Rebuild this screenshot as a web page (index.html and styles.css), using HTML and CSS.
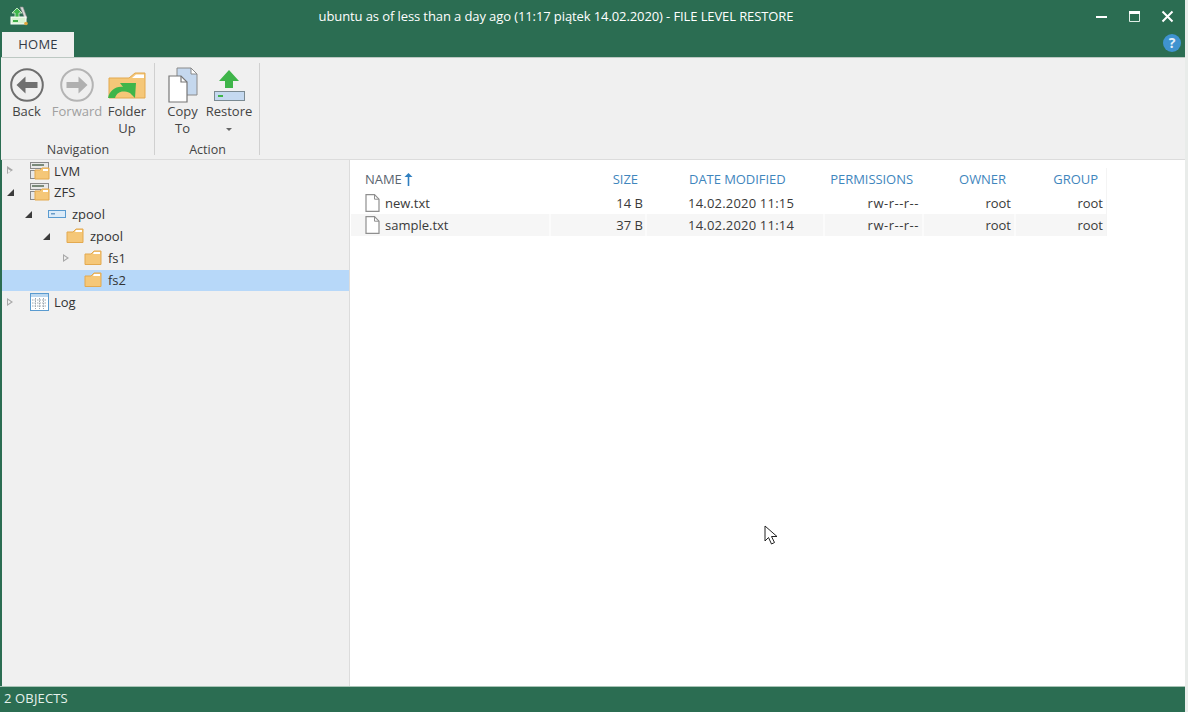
FILE: index.html
```html
<!DOCTYPE html>
<html lang="pl">
<head>
<meta charset="utf-8">
<title>File Level Restore</title>
<link rel="stylesheet" href="styles.css">
</head>
<body>
<div class="app">
  <header class="titlebar">
    <div class="titlerow">
      <svg class="appicon" width="20" height="20" viewBox="0 0 20 20"><path d="M11 1h3l4 11-2 1z" fill="#d8d8d8" stroke="#888" stroke-width=".6"/><rect x="2" y="11" width="15" height="7" fill="#d6f2d0" stroke="#fff"/><rect x="4" y="14" width="5" height="2" fill="#3fae49"/><path d="M8 2l5 5h-3v4H6V7H3z" fill="#3fb54a" stroke="#dff5dc" stroke-width=".8"/><circle cx="17" cy="17.500" r="1.800" fill="#e0a63c"/></svg>
      <div class="title">ubuntu as of less than a day ago (11:17 piątek 14.02.2020) - FILE LEVEL RESTORE</div>
      <div class="winbtns">
        <svg width="13" height="13" viewBox="0 0 13 13"><rect x="1" y="6" width="11" height="2" fill="#fff"/></svg>
        <svg width="13" height="13" viewBox="0 0 13 13"><path d="M1.500 1.500h10v10h-10z" fill="none" stroke="#dfeee7"/><rect x="1" y="1" width="11" height="3" fill="#fff"/></svg>
        <svg width="13" height="13" viewBox="0 0 13 13"><path d="M1.500 1.500l10 10M11.500 1.500l-10 10" stroke="#fff" stroke-width="2"/></svg>
      </div>
    </div>
    <div class="tabrow">
      <div class="tab">HOME</div>
      <div class="help">?</div>
    </div>
  </header>

  <section class="ribbon">
    <div class="group groupnav">
      <div class="tools">
        <div class="tool toolback">
          <svg width="36" height="36" viewBox="0 0 36 36"><circle cx="18" cy="18" r="15.800" fill="#efefef" stroke="#6e6e6e" stroke-width="2"/><path d="M7.500 18l9-8.500v5.500h12v6h-12v5.500z" fill="#707070"/></svg>
          <span class="lbl">Back</span>
        </div>
        <div class="tool toolfwd dis">
          <svg width="36" height="36" viewBox="0 0 36 36"><circle cx="18" cy="18" r="15.800" fill="#efefef" stroke="#b4b4b4" stroke-width="2"/><path d="M28.500 18l-9-8.500v5.500h-12v6h12v5.500z" fill="#b0b0b0"/></svg>
          <span class="lbl">Forward</span>
        </div>
        <div class="tool toolup">
          <svg width="38" height="30" viewBox="0 0 38 30"><path d="M1 6h20l6-5h10v25H1z" fill="#f5c778" stroke="#e3a94f"/><path d="M24 6l4-3.500h8V6z" fill="#fff"/><path d="M0 26C2 18 8 14 15 15l-3-4h16l-1 15-5-5C14 18 9 20 7 26z" fill="#3fb54a"/></svg>
          <span class="lbl">Folder<br>Up</span>
        </div>
      </div>
      <div class="grouplabel">Navigation</div>
    </div>
    <div class="group groupact">
      <div class="tools">
        <div class="tool toolcopy">
          <svg width="32" height="36" viewBox="0 0 32 36"><path d="M10 1h14l6 6v21H10z" fill="#c5d8ee" stroke="#8a8a8a"/><path d="M24 1v6h6z" fill="#fff" stroke="#8a8a8a"/><path d="M2 9h12l6 6v20H2z" fill="#fff" stroke="#777" stroke-width="1.200"/><path d="M14 9v6h6" fill="none" stroke="#777" stroke-width="1.200"/></svg>
          <span class="lbl">Copy<br>To</span>
        </div>
        <div class="tool toolrestore">
          <svg width="34" height="36" viewBox="0 0 34 36"><path d="M17 3l10 11h-6v7h-8v-7H7z" fill="#3fb54a"/><rect x="2.500" y="24.500" width="30" height="9" fill="#c5d9f0" stroke="#7b8a92"/><rect x="6" y="28" width="5" height="2" fill="#3fb54a"/></svg>
          <span class="lbl">Restore</span>
          <span class="caret"></span>
        </div>
      </div>
      <div class="grouplabel">Action</div>
    </div>
  </section>

  <main class="panes">
    <nav class="tree">
      <div class="node top">
        <span class="arrow open0"></span>
        <svg class="ic" width="20" height="18" viewBox="0 0 20 18"><rect x=".5" y=".5" width="18" height="6" fill="#e8e8e8" stroke="#8a8a8a"/><rect x="2" y="2" width="12" height="2" fill="#7a8a7a"/><rect x=".5" y="8.500" width="5" height="8" fill="#e8e8e8" stroke="#8a8a8a"/><path d="M5 8h5l2-2h7v11H5z" fill="#f5c778" stroke="#e3a94f"/><rect x="13" y="7" width="5" height="2" fill="#fff"/></svg>
        <span>LVM</span>
      </div>
      <div class="node">
        <span class="arrow filled"></span>
        <svg class="ic" width="20" height="18" viewBox="0 0 20 18"><rect x=".5" y=".5" width="18" height="6" fill="#e8e8e8" stroke="#8a8a8a"/><rect x="2" y="2" width="12" height="2" fill="#7a8a7a"/><rect x=".5" y="8.500" width="5" height="8" fill="#e8e8e8" stroke="#8a8a8a"/><path d="M5 8h5l2-2h7v11H5z" fill="#f5c778" stroke="#e3a94f"/><rect x="13" y="7" width="5" height="2" fill="#fff"/></svg>
        <span>ZFS</span>
      </div>
      <div class="node lvl1">
        <span class="arrow filled"></span>
        <svg class="ic" width="18" height="18" viewBox="0 0 18 18"><rect x=".5" y="5.500" width="17" height="7" fill="#dcebf8" stroke="#5a9bd0"/><rect x="3" y="8" width="4" height="1.500" fill="#6a9cc8"/></svg>
        <span>zpool</span>
      </div>
      <div class="node lvl2">
        <span class="arrow filled"></span>
        <svg class="ic" width="18" height="18" viewBox="0 0 18 18"><path d="M1 5h6l3-3h7v13.500H1z" fill="#f5c778" stroke="#e3a94f"/><path d="M10 3h6v2h-7z" fill="#fff"/></svg>
        <span>zpool</span>
      </div>
      <div class="node lvl3">
        <span class="arrow open0"></span>
        <svg class="ic" width="18" height="18" viewBox="0 0 18 18"><path d="M1 5h6l3-3h7v13.500H1z" fill="#f5c778" stroke="#e3a94f"/><path d="M10 3h6v2h-7z" fill="#fff"/></svg>
        <span>fs1</span>
      </div>
      <div class="node lvl3 selected">
        <span class="arrow none"></span>
        <svg class="ic" width="18" height="18" viewBox="0 0 18 18"><path d="M1 5h6l3-3h7v13.500H1z" fill="#f5c778" stroke="#e3a94f"/><path d="M10 3h6v2h-7z" fill="#fff"/></svg>
        <span>fs2</span>
      </div>
      <div class="node">
        <span class="arrow open0"></span>
        <svg class="ic" width="20" height="18" viewBox="0 0 20 18"><rect x=".5" y=".5" width="18" height="17" fill="#fff" stroke="#5a9bd0"/><rect x="1" y="1" width="17" height="3" fill="#bcd8f0"/><path d="M2 7h15M2 10h15M2 13h15M5.500 5v11M9.500 5v11M13.500 5v11" stroke="#9fa8b0" stroke-width="1" stroke-dasharray="1.500 1"/></svg>
        <span>Log</span>
      </div>
    </nav>
    <div class="files">
      <div class="table">
        <div class="row head">
          <div class="c name">NAME<svg class="sort" width="9" height="13" viewBox="0 0 9 13"><path d="M4.500 0L8.500 4H5.300v9H3.700V4H.5z" fill="#2f7fc1"/></svg></div>
          <div class="c size">SIZE</div>
          <div class="c date">DATE MODIFIED</div>
          <div class="c perm">PERMISSIONS</div>
          <div class="c owner">OWNER</div>
          <div class="c group2">GROUP</div>
        </div>
        <div class="row">
          <div class="c name"><svg width="15" height="18" viewBox="0 0 15 18"><path d="M1 .7h8.500l4.500 4.500v12.100H1z" fill="#fff" stroke="#8f8f8f" stroke-width="1.200"/><path d="M9.500 .7v4.500H14" fill="none" stroke="#8f8f8f"/></svg>new.txt</div>
          <div class="c size">14 B</div>
          <div class="c date">14.02.2020 11:15</div>
          <div class="c perm">rw-r--r--</div>
          <div class="c owner">root</div>
          <div class="c group2">root</div>
        </div>
        <div class="row alt">
          <div class="c name"><svg width="15" height="18" viewBox="0 0 15 18"><path d="M1 .7h8.500l4.500 4.500v12.100H1z" fill="#fff" stroke="#8f8f8f" stroke-width="1.200"/><path d="M9.500 .7v4.500H14" fill="none" stroke="#8f8f8f"/></svg>sample.txt</div>
          <div class="c size">37 B</div>
          <div class="c date">14.02.2020 11:14</div>
          <div class="c perm">rw-r--r--</div>
          <div class="c owner">root</div>
          <div class="c group2">root</div>
        </div>
      </div>
    </div>
  </main>

  <footer class="status">2 OBJECTS</footer>
</div>
<svg class="cursor" width="15" height="21" viewBox="0 0 15 21"><path d="M1 1v15l3.500-3.500 3 6.500 3-1.500-3-6H13z" fill="#fff" stroke="#222" stroke-width="1"/></svg>
</body>
</html>
```

FILE: styles.css
```css
* { box-sizing: border-box; }
html, body { margin: 0; padding: 0; height: 100%; overflow: hidden; }
body {
  font-family: "Open Sans", "Noto Sans", "Liberation Sans", sans-serif;
  font-size: 13px;
  color: #3a3a3a;
  background: #e9ecea;
}
.app {
  width: 1185px;
  height: 712px;
  display: flex;
  flex-direction: column;
  background: #2b6d52;
}
.titlebar { height: 57px; flex: none; display: flex; flex-direction: column; }
.titlerow { height: 32px; display: flex; align-items: center; padding: 0 11px 0 9px; }
.appicon { flex: none; }
.title {
  flex: 1;
  text-align: center;
  color: #fff;
  font-size: 13px;
  padding-right: 12px;
  letter-spacing: -.1px;
  white-space: nowrap;
}
.winbtns { display: flex; gap: 20px; align-items: center; }
.tabrow { height: 25px; display: flex; align-items: flex-end; justify-content: space-between; padding: 0 4px 0 2px; }
.tab {
  width: 72px;
  height: 25px;
  background: #f0f0f0;
  color: #333a46;
  text-align: center;
  line-height: 25px;
  font-size: 13px;
  letter-spacing: .25px;
}
.help {
  width: 18px;
  height: 18px;
  margin-bottom: 5px;
  border-radius: 50%;
  background: #3f93d0;
  color: #e4f0fa;
  font-weight: 700;
  font-size: 14px;
  line-height: 18px;
  text-align: center;
}
.ribbon {
  height: 103px;
  flex: none;
  margin-left: 1px;
  background: #f0f0f0;
  border-top: 1px solid #bcc8c2;
  border-bottom: 1px solid #dcdcdc;
  display: flex;
  padding-top: 5px;
}
.group {
  display: flex;
  flex-direction: column;
  border-right: 1px solid #d0d0d0;
  height: 92px;
  padding-left: 1px;
}
.groupnav { width: 154px; }
.groupact { width: 105px; }
.tools { height: 82px; flex: none; display: flex; }
.tool {
  display: flex;
  flex-direction: column;
  align-items: center;
  text-align: center;
  line-height: 17px;
  font-size: 13px;
  color: #444;
  padding-top: 4px;
}
.tool svg { flex: none; }
.lbl { display: block; }
.toolback { width: 50px; padding-right: 1px; }
.toolfwd { width: 50px; }
.toolup { width: 50px; padding-top: 9px; }
.toolup .lbl { margin-top: 1px; }
.dis { color: #a0a0a0; }
.toolcopy { width: 49px; padding-left: 4px; }
.toolrestore { width: 48px; }
.caret { width: 0; height: 0; margin-top: 8px; border-left: 3px solid transparent; border-right: 3px solid transparent; border-top: 3px solid #666; }
.grouplabel { height: 10px; text-align: center; font-size: 12.500px; line-height: 10px; color: #444; }
.panes { flex: 1; min-height: 0; display: flex; margin-left: 2px; background: #fff; }
.tree {
  width: 348px;
  flex: none;
  background: #f0f0f0;
  border-right: 1px solid #dcdcdc;
}
.node { height: 22px; display: flex; align-items: center; gap: 3px; padding-left: 5px; color: #333; }
.node.top { height: 21px; }
.node .ic { margin-right: 1px; }
.lvl1 { padding-left: 23px; }
.lvl2 { padding-left: 41px; }
.lvl3 { padding-left: 61px; }
.lvl1 .ic, .lvl2 .ic, .lvl3 .ic { margin-right: 3px; }
.lvl3 .arrow { margin-right: 10px; }
.selected { background: #b7d8f9; height: 21px; margin-top: 1px; padding-bottom: 1px; }
.arrow { width: 8px; height: 9px; flex: none; margin-right: 12px; position: relative; }
.open0::before {
  content: "";
  display: block;
  width: 0; height: 0;
  border-left: 6px solid #a8a8a8;
  border-top: 4.500px solid transparent;
  border-bottom: 4.500px solid transparent;
}
.open0::after {
  content: "";
  position: absolute;
  left: 1px; top: 2.500px;
  width: 0; height: 0;
  border-left: 3.500px solid #f0f0f0;
  border-top: 2px solid transparent;
  border-bottom: 2px solid transparent;
}
.filled::before {
  content: "";
  display: block;
  width: 0; height: 0;
  margin-top: 1px;
  border-right: 7px solid #3c3c3c;
  border-top: 7px solid transparent;
}
.ic { flex: none; }
.files { flex: 1; padding: 8px 0 0 1px; }
.table { width: 756px; border-right: 1px solid #f4f4f4; }
.row {
  display: grid;
  grid-template-columns: 200px 96px 178px 99px 92px 90px;
  height: 22px;
  align-items: center;
  color: #3a3a3a;
}
.head { height: 22px; color: #3f86bd; margin-bottom: 2px; font-size: 13px; letter-spacing: -.05px; }
.c { white-space: nowrap; }
.name { padding-left: 14px; display: flex; align-items: center; gap: 5px; }
.head .name { color: #5a6570; gap: 2px; }
.sort { flex: none; }
.size, .group2 { text-align: right; padding-right: 4px; }
.perm, .owner { text-align: right; padding-right: 5px; }
.head .size { padding-right: 9px; }
.head .perm { padding-right: 11px; }
.head .owner { padding-right: 10px; }
.head .group2 { padding-right: 8px; }
.group2 { padding-right: 3px; }
.date { padding-left: 41px; letter-spacing: .2px; }
.head .date { padding-left: 42px; letter-spacing: -.05px; }
.row:not(.head) .perm { letter-spacing: .5px; }
.alt .c {
  height: 22px;
  line-height: 22px;
  background: #f6f6f6;
  border-right: 2px solid #fbfbfb;
}
.alt .size { padding-right: 2px; }
.alt .perm, .alt .owner { padding-right: 3px; }
.alt .group2 { padding-right: 3px; border-right: 0; }
.status {
  height: 26px;
  flex: none;
  color: #e6f1ec;
  font-size: 13px;
  line-height: 23px;
  padding-left: 4px;
  border-top: 1px solid #a8c4b6;
  letter-spacing: .15px;
}
.cursor { position: absolute; left: 764px; top: 525px; }
```
